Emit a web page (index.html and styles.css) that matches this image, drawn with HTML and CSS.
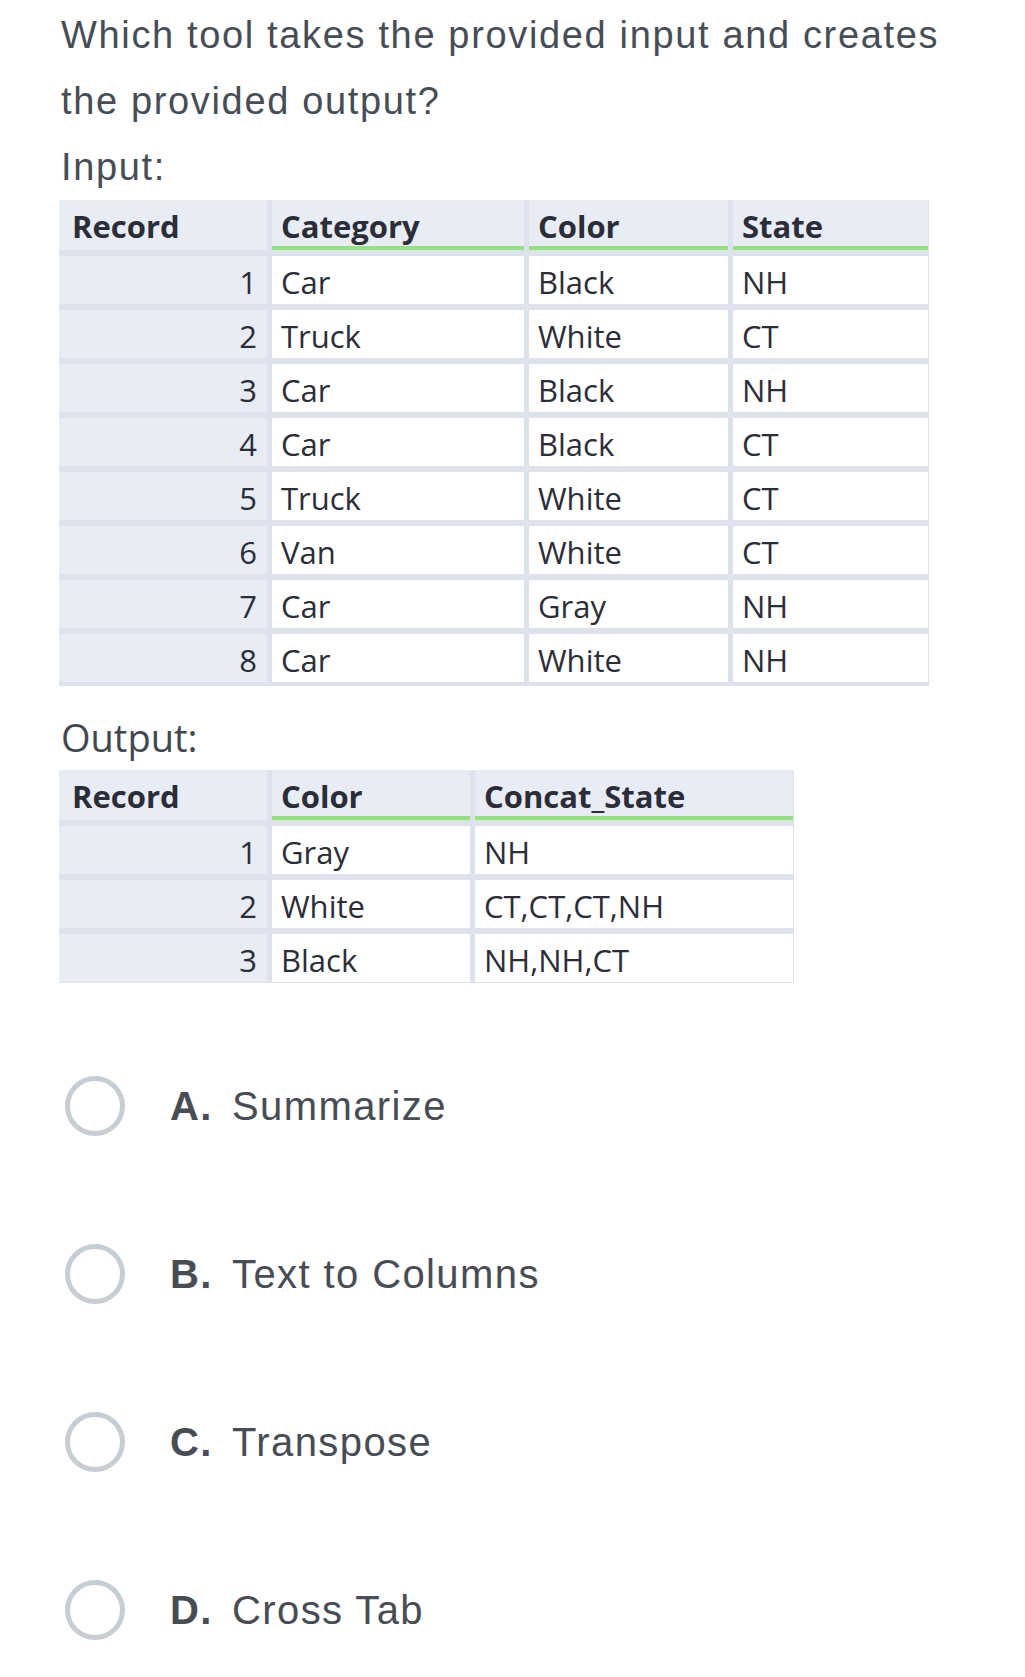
FILE: index.html
```html
<!DOCTYPE html>
<html>
<head>
<meta charset="utf-8">
<link rel="stylesheet" href="styles.css">
</head>
<body>
<div class="page">
  <p class="question">Which tool takes the provided input and creates the provided output?</p>
  <p class="label">Input:</p>
  <div class="grid grid-input">
    <div class="hcell rec">Record</div>
    <div class="hcell data">Category</div>
    <div class="hcell data">Color</div>
    <div class="hcell data">State</div>

    <div class="cell rec">1</div><div class="cell">Car</div><div class="cell">Black</div><div class="cell">NH</div>
    <div class="cell rec">2</div><div class="cell">Truck</div><div class="cell">White</div><div class="cell">CT</div>
    <div class="cell rec">3</div><div class="cell">Car</div><div class="cell">Black</div><div class="cell">NH</div>
    <div class="cell rec">4</div><div class="cell">Car</div><div class="cell">Black</div><div class="cell">CT</div>
    <div class="cell rec">5</div><div class="cell">Truck</div><div class="cell">White</div><div class="cell">CT</div>
    <div class="cell rec">6</div><div class="cell">Van</div><div class="cell">White</div><div class="cell">CT</div>
    <div class="cell rec">7</div><div class="cell">Car</div><div class="cell">Gray</div><div class="cell">NH</div>
    <div class="cell rec">8</div><div class="cell">Car</div><div class="cell">White</div><div class="cell">NH</div>
  </div>
  <p class="out-label">Output:</p>
  <div class="grid grid-output">
    <div class="hcell rec">Record</div>
    <div class="hcell data">Color</div>
    <div class="hcell data">Concat_State</div>

    <div class="cell rec">1</div><div class="cell">Gray</div><div class="cell">NH</div>
    <div class="cell rec">2</div><div class="cell">White</div><div class="cell">CT,CT,CT,NH</div>
    <div class="cell rec">3</div><div class="cell">Black</div><div class="cell">NH,NH,CT</div>
  </div>
  <ul class="options">
    <li class="option"><span class="radio"></span><span class="letter">A.</span><span class="text">Summarize</span></li>
    <li class="option"><span class="radio"></span><span class="letter">B.</span><span class="text">Text to Columns</span></li>
    <li class="option"><span class="radio"></span><span class="letter">C.</span><span class="text">Transpose</span></li>
    <li class="option"><span class="radio"></span><span class="letter">D.</span><span class="text">Cross Tab</span></li>
  </ul>
</div>
</body>
</html>
```
FILE: styles.css
```css
body {
  margin: 0;
  background: #ffffff;
}

.page {
  padding: 2px 0 0 61px;
  width: 920px;
}

.question,
.label {
  margin: 0;
  font-family: "Liberation Sans", Arial, sans-serif;
  font-size: 38px;
  line-height: 66px;
  letter-spacing: 1.65px;
  color: #474d56;
}

.grid {
  display: grid;
  width: fit-content;
  margin-left: -2px;
  background: #dde2ed;
  column-gap: 5px;
  row-gap: 6px;
  grid-template-rows: 50px;
  grid-auto-rows: 48px;
  font-family: "Open Sans", "Noto Sans", sans-serif;
  color: #2b2d38;
}

.grid-input {
  grid-template-columns: 208px 252px 199px 195px;
  padding: 0 1px 4px 0;
}

.grid-output {
  grid-template-columns: 208px 198px 318px;
  padding: 0 1px 1px 0;
}

.hcell {
  box-sizing: border-box;
  background: #e8ecf5;
  font-weight: 700;
  font-size: 31px;
  line-height: 40px;
  padding: 6px 0 0 9px;
}

.hcell.rec {
  padding-left: 13px;
}

.hcell.data {
  border-bottom: 4px solid #93e27a;
}

.cell {
  box-sizing: border-box;
  background: #ffffff;
  font-size: 31px;
  line-height: 42px;
  padding: 5px 0 0 9px;
}

.cell.rec {
  background: #e8ecf5;
  text-align: right;
  padding: 5px 10px 0 0;
}

.out-label {
  margin: 0;
  font-family: "Open Sans", "Noto Sans", sans-serif;
  font-size: 38px;
  line-height: 52px;
  padding: 25px 0 7px;
  color: #42474f;
}

.options {
  list-style: none;
  margin: 39px 0 0;
  padding: 0;
}

.option {
  height: 168px;
  display: flex;
  align-items: center;
  font-family: "Liberation Sans", Arial, sans-serif;
  font-size: 40px;
  letter-spacing: 1.4px;
  color: #474c55;
}

.radio {
  box-sizing: border-box;
  width: 60px;
  height: 60px;
  margin-left: 4px;
  border: 5px solid #c6cdd4;
  border-radius: 50%;
  flex: none;
}

.letter {
  width: 62px;
  margin-left: 45px;
  font-weight: 700;
  flex: none;
}
```
